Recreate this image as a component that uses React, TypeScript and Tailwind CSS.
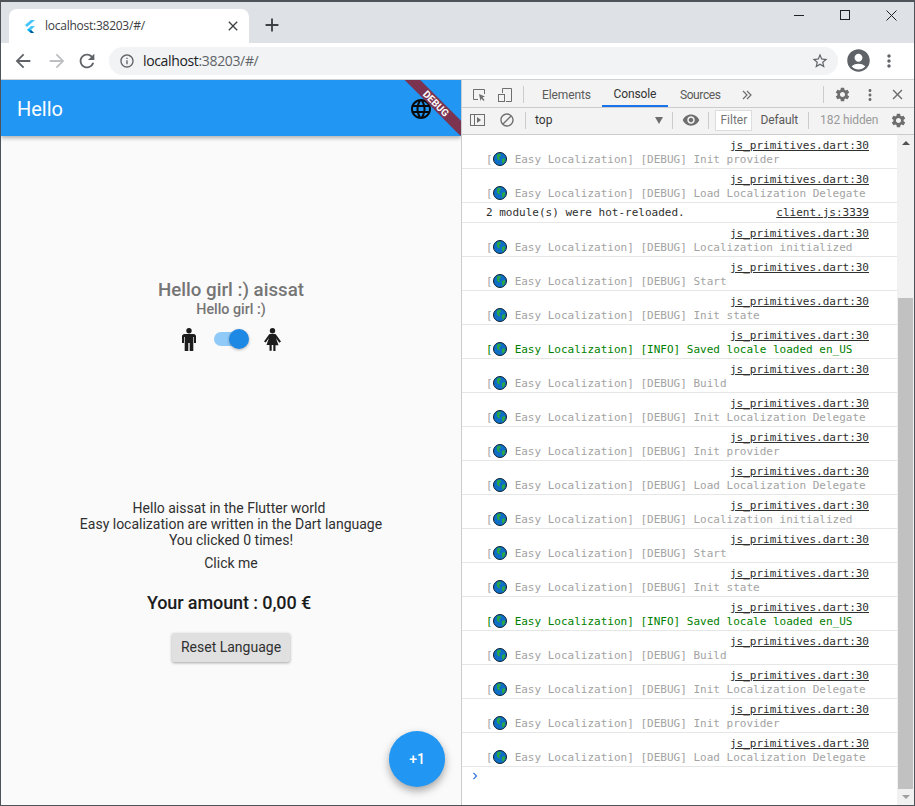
import React from "react";
import { MdArrowBack, MdArrowForward, MdRefresh, MdInfoOutline, MdStarBorder, MdAccountCircle, MdMoreVert, MdClose, MdAdd, MdLanguage, MdSettings, MdBlock, MdVisibility, MdChevronRight } from "react-icons/md";

type Row = { kind: "debug" | "info" | "plain"; text: string };
const d = (text: string): Row => ({ kind: "debug", text });
const i = (text: string): Row => ({ kind: "info", text });
const rows: Row[] = [
  d("Init provider"), d("Load Localization Delegate"), { kind: "plain", text: "2 module(s) were hot-reloaded." },
  d("Localization initialized"), d("Start"), d("Init state"), i("Saved locale loaded en_US"), d("Build"),
  d("Init Localization Delegate"), d("Init provider"), d("Load Localization Delegate"), d("Localization initialized"),
  d("Start"), d("Init state"), i("Saved locale loaded en_US"), d("Build"), d("Init Localization Delegate"),
  d("Init provider"), d("Load Localization Delegate"),
];

function Earth() {
  return (
    <svg width="14" height="14" viewBox="0 0 14 14" className="shrink-0 -mt-[2px]">
      <circle cx="7" cy="7" r="6.5" fill="#0f6fc6" stroke="#0c1f33" strokeWidth="1" />
      <path d="M4 2.500l3-1 1 2-2 2 1 2-1 1-2-2zM9 7l3-1 0 3-2 3-1-2z" fill="#27a844" />
    </svg>
  );
}

function LogRow({ row }: { row: Row }) {
  if (row.kind === "plain") {
    return (
      <div className="h-5 shrink-0 border-b border-[#e6e6e6] pt-[1px] flex items-center justify-between pl-6 pr-7 text-[#303030]">
        <span>{row.text}</span>
        <span className="underline text-[#303030]">client.js:3339</span>
      </div>
    );
  }
  const info = row.kind === "info";
  const color = info ? "text-[#008000]" : "text-[#a3a3a3]";
  return (
    <div className="h-[34px] shrink-0 border-b border-[#e6e6e6] flex flex-col pl-6 pr-7">
      <div className="h-[14px] mt-[4px] leading-[14px] text-right underline text-[#303030]">js_primitives.dart:30</div>
      <div className={`h-[14px] leading-[14px] flex items-center whitespace-pre ${color}`}>
        <span>[</span>
        <Earth />
        <span className="ml-2">Easy Localization] [{info ? "INFO" : "DEBUG"}] {row.text}</span>
      </div>
    </div>
  );
}

function Divider({ className }: { className: string }) {
  return <div className={`w-px h-[17px] bg-[#cccccc] ${className}`} />;
}

function FlutterLogo() {
  return (
    <svg width="11" height="13" viewBox="0 0 11 13">
      <path d="M7 0h4L3 7 1 5z" fill="#47c5fb" />
      <path d="M7 6h4L7 10 5 8z" fill="#47c5fb" />
      <path d="M5 8l2 2 3 3H7L3 10z" fill="#00b5f8" />
      <path d="M7 10l3 3H7L5.500 11.500z" fill="#00569e" />
    </svg>
  );
}

function Man() {
  return (
    <svg width="14" height="23" viewBox="0 0 14 23" fill="#1c1c1c">
      <circle cx="7" cy="2.700" r="2.700" />
      <path d="M2.500 6h9C13 6 14 7 14 8.500V15h-2v-6h-.7v14H7.700v-8H6.300v8H2.700V9H2v6H0V8.500C0 7 1 6 2.500 6z" />
    </svg>
  );
}

function Woman() {
  return (
    <svg width="17" height="23" viewBox="0 0 17 23" fill="#1c1c1c">
      <circle cx="8.500" cy="2.700" r="2.700" />
      <path d="M6.500 6h4c1 0 1.500.5 2 1.300L17 13.500l-1.700 1.200-3.300-4.500 2.500 7H11.500v5.800H9.300V17H7.700v5.800H5.500V17H2.500l2.500-7-3.300 4.500L0 13.500l4.500-6.200C5 6.500 5.500 6 6.500 6z" />
    </svg>
  );
}

export default function App() {
  return (
    <div className="w-[915px] h-[806px] overflow-hidden flex flex-col border border-[#4d5359] border-t-2 font-['Roboto',sans-serif] bg-white">
      {/* tab strip */}
      <div className="h-[41px] shrink-0 bg-[#dee1e6] flex items-end relative">
        <div className="ml-2 w-[240px] h-[34px] bg-white rounded-t-lg flex items-center pl-[15px] text-[12px] text-[#3c4043]">
          <FlutterLogo />
          <span className="ml-[10px] font-['Open_Sans',sans-serif] tracking-[-0.25px]">localhost:38203/#/</span>
          <MdClose className="ml-auto mr-2 text-[#3c4043]" size={16} />
        </div>
        <MdAdd className="ml-[12px] mb-[7px] text-[#3c4043]" size={22} />
        <div className="ml-auto h-full flex items-start pt-[7px] pr-[17px] text-[#202124]">
          <svg width="11" height="11" viewBox="0 0 11 11" className="mt-[1px]"><path d="M0 5.500h10" stroke="#202124" strokeWidth="1" /></svg>
          <svg width="11" height="11" viewBox="0 0 11 11" className="ml-[35px] mt-[1px]"><rect x="0.500" y="0.500" width="9" height="9" fill="none" stroke="#202124" strokeWidth="1" /></svg>
          <svg width="11" height="11" viewBox="0 0 11 11" className="ml-[35px] mt-[1px]"><path d="M0.500 0.500l10 10M10.500 0.500l-10 10" stroke="#202124" strokeWidth="1" /></svg>
        </div>
      </div>
      {/* address bar */}
      <div className="h-[37px] shrink-0 bg-white flex items-center border-b border-[#d0d2d4] pb-[1px]">
        <MdArrowBack className="ml-[11px] text-[#5f6368]" size={22} />
        <MdArrowForward className="ml-[12px] text-[#bdbfc2]" size={22} />
        <MdRefresh className="ml-[8px] text-[#5f6368]" size={22} />
        <div className="ml-[11px] w-[729px] h-[28px] rounded-full bg-[#f1f3f4] flex items-center pl-[10px] pr-[9px]">
          <MdInfoOutline className="text-[#5f6368]" size={16} />
          <span className="ml-[8px] text-[14px] font-['Open_Sans',sans-serif] tracking-[-0.35px] text-[#202124]">localhost<span className="text-[#5f6368]">:38203/#/</span></span>
          <MdStarBorder className="ml-auto text-[#5f6368]" size={18} />
        </div>
        <MdAccountCircle className="ml-[7px] text-[#5f6368]" size={27} />
        <MdMoreVert className="ml-[7px] text-[#5f6368]" size={20} />
      </div>
      {/* main */}
      <div className="flex-1 min-h-0 flex">
        {/* flutter */}
        <div className="w-[460px] shrink-0 relative overflow-hidden bg-[#fafafa] flex flex-col">
          <div className="h-[56px] shrink-0 bg-[#2196f3] shadow-[0_2px_4px_rgba(0,0,0,0.3)] flex items-center pl-4 pt-[2px] text-[20px] text-white">
            <span>Hello</span>
            <MdLanguage className="ml-auto mr-[28px] text-[#0a0a0a]" size={24} />
          </div>
          <div className="flex flex-col items-center pt-[143px] text-[#333333]">
            <div className="h-[22px] leading-[22px] text-[18.700px] font-medium text-[#757575]">Hello girl :) aissat</div>
            <div className="h-[16px] leading-[16px] text-[14.300px] font-medium text-[#757575]">Hello girl :)</div>
            <div className="mt-[10px] h-[24px] flex items-center text-[#1c1c1c]">
              <Man />
              <div className="relative ml-[18px] w-[34px] h-[14px] rounded-full bg-[#90caf9]">
                <div className="absolute -right-px -top-[3px] w-5 h-5 rounded-full bg-[#1e88e5] shadow-[0_1px_3px_rgba(0,0,0,0.3)]" />
              </div>
              <div className="ml-[16px]"><Woman /></div>
            </div>
            <div className="mt-[149px] flex flex-col items-center text-[14px] leading-[16px] text-[#303030]">
              <div className="pr-[4px]">Hello aissat in the Flutter world</div>
              <div>Easy localization are written in the Dart language</div>
              <div>You clicked 0 times!</div>
              <div className="mt-[7px]">Click me</div>
            </div>
            <div className="mt-[20px] h-[24px] pr-[4px] leading-[24px] text-[18px] tracking-[-0.1px] font-medium text-[#1c1c1c]">Your amount : 0,00 €</div>
            <div className="mt-[18px] w-[118px] h-[29px] rounded-[2px] bg-[#e0e0e0] shadow-[0_1px_3px_rgba(0,0,0,0.35)] flex items-center justify-center text-[14px] text-[#303030]">Reset Language</div>
          </div>
          <div className="absolute left-[388px] top-[651px] w-14 h-14 rounded-full bg-[#2196f3] shadow-[0_4px_8px_rgba(0,0,0,0.35)] flex items-center justify-center text-white text-[14px] font-medium">+1</div>
          <div className="absolute left-[395px] top-[18px] w-[80px] h-[11px] rotate-45 bg-[#7b3350] flex items-center justify-center text-white text-[10px] font-bold leading-none">DEBUG</div>
        </div>
        {/* devtools */}
        <div className="flex-1 min-w-0 border-l border-[#cccccc] flex flex-col font-['Roboto',sans-serif]">
          <div className="h-[28px] shrink-0 bg-[#f3f3f3] border-b border-[#cccccc] pt-[2px] flex items-center text-[12px] text-[#5a5a5a]">
            <svg width="14" height="14" viewBox="0 0 14 14" className="ml-[10px]"><path d="M12.500 6V1.500h-11v10H6" fill="none" stroke="#6e6e6e" strokeWidth="1" /><path d="M7 6l6 2.500-2.500 1L12.500 12l-1 1-2-2.500-1 2.500z" fill="#6e6e6e" /></svg>
            <svg width="16" height="16" viewBox="0 0 16 16" className="ml-[11px]"><path d="M5.500 6V1.500h9v13H9" fill="none" stroke="#6e6e6e" strokeWidth="1" /><rect x="1.500" y="7.500" width="6" height="7" fill="none" stroke="#6e6e6e" strokeWidth="1" /></svg>
            <Divider className="ml-[10px]" />
            <span className="ml-[18px] tracking-[-0.1px]">Elements</span>
            <div className="ml-[11px] w-[66px] h-full border-b-2 border-[#1a73e8] flex items-center justify-center text-[#333333] tracking-[-0.1px]">Console</div>
            <span className="ml-[12px] tracking-[-0.4px]">Sources</span>
            <svg width="10" height="10" viewBox="0 0 10 10" className="ml-[21px]"><path d="M1 1l4 4-4 4M5 1l4 4-4 4" fill="none" stroke="#6e6e6e" strokeWidth="1.200" /></svg>
            <Divider className="ml-[71px]" />
            <MdSettings className="ml-[10px] text-[#6e6e6e]" size={17} />
            <MdMoreVert className="ml-[10px] text-[#6e6e6e]" size={18} />
            <MdClose className="ml-[10px] text-[#6e6e6e]" size={17} />
          </div>
          <div className="h-[27px] shrink-0 bg-[#f3f3f3] border-b border-[#cccccc] pb-[2px] flex items-center text-[12px] text-[#5a5a5a]">
            <svg width="16" height="14" viewBox="0 0 16 14" className="ml-[8px]"><rect x="0.500" y="1.500" width="14" height="11" fill="none" stroke="#6e6e6e" /><path d="M4.500 1.500v11" stroke="#6e6e6e" /><path d="M7 4l4 3-4 3z" fill="#6e6e6e" /></svg>
            <MdBlock className="ml-[13px] text-[#6e6e6e]" size={16} />
            <Divider className="ml-[10px]" />
            <span className="ml-[9px] text-[#333333]">top</span>
            <span className="ml-[103px] w-0 h-0 border-x-[4px] border-x-transparent border-t-[7px] border-t-[#6e6e6e]" />
            <Divider className="ml-[9px]" />
            <MdVisibility className="ml-[9px] text-[#6e6e6e]" size={18} />
            <Divider className="ml-[8px]" />
            <div className="ml-[6px] w-[37px] h-[21px] bg-white border border-[#dddddd] flex items-center justify-center text-[#757575]">Filter</div>
            <span className="ml-[8px] tracking-[-0.1px]">Default</span>
            <Divider className="ml-[10px]" />
            <span className="ml-[11px] text-[#9a9a9a] tracking-[-0.1px]">182 hidden</span>
            <MdSettings className="ml-[12px] text-[#6e6e6e]" size={17} />
          </div>
          <div className="flex-1 min-h-0 flex">
            <div className="flex-1 min-w-0 flex flex-col font-['DejaVu_Sans_Mono',monospace] text-[11px] leading-[14px]">
              {rows.map((r, idx) => (
                <LogRow key={idx} row={r} />
              ))}
              <MdChevronRight className="ml-[6px] mt-[2px] text-[#2a6fdb]" size={14} />
            </div>
            <div className="w-[17px] shrink-0 bg-[#f1f1f1] flex flex-col items-center">
              <span className="mt-[6px] w-0 h-0 border-x-[4px] border-x-transparent border-b-[4px] border-b-[#505050]" />
              <div className="mt-[153px] w-[15px] h-[491px] bg-[#c1c1c1]" />
              <span className="mt-[6px] w-0 h-0 border-x-[4px] border-x-transparent border-t-[4px] border-t-[#a0a0a0]" />
            </div>
          </div>
        </div>
      </div>
    </div>
  );
}
